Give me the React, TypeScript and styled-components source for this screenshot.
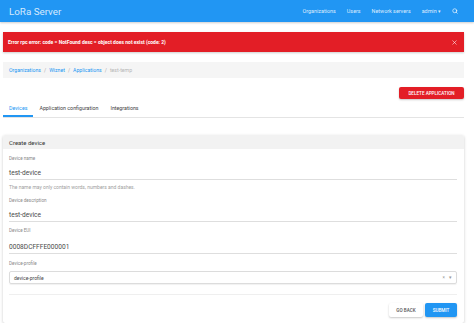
import styled, { createGlobalStyle } from "styled-components"
import { Search, X } from "lucide-react"

const GlobalStyle = createGlobalStyle`
  html, body {
    margin: 0;
    padding: 0;
    background: #fff;
    font-family: Roboto, "Liberation Sans", sans-serif;
  }
`

const AppBar = styled.header`
  height: 22px;
  background: #2196f3;
  display: flex;
  align-items: center;
  padding: 0 9px;
  box-shadow: 0 1px 2px rgba(0, 0, 0, 0.2);
`

const Title = styled.div`
  font-size: 9.8px;
  color: rgba(255, 255, 255, 0.82);
  flex: 1;
`

const Nav = styled.nav`
  display: flex;
  align-items: center;
  gap: 11px;
  padding-right: 7px;
`

const NavItem = styled.span`
  font-size: 5.4px;
  color: rgba(255, 255, 255, 0.85);
  display: flex;
  align-items: center;
  gap: 2px;
`

const Main = styled.main`
  padding: 10px 10px 0 3px;
`

const ErrorBanner = styled.div`
  height: 20px;
  background: #e31e26;
  display: flex;
  align-items: center;
  padding: 0 6px 0 5px;
  box-shadow: 0 1px 2px rgba(0, 0, 0, 0.2);

  span {
    flex: 1;
    color: #fff;
    font-size: 5px;
    font-weight: 700;
  }

  svg {
    color: rgba(255, 255, 255, 0.75);
  }
`

const Breadcrumbs = styled.div`
  margin-top: 10px;
  height: 16px;
  background: #f5f5f5;
  display: flex;
  align-items: center;
  padding: 0 6px;
  font-size: 5.2px;
  gap: 3px;
`

const Crumb = styled.span<{ $current?: boolean }>`
  color: ${(p) => (p.$current ? "#b5b5b5" : "#2196f3")};
`

const Sep = styled.span`
  color: #aaa;
`

const ActionRow = styled.div`
  display: flex;
  justify-content: flex-end;
  margin-top: 9px;
`

const Button = styled.button<{ $color?: string; $text?: string; $width: number; $height: number }>`
  height: ${(p) => p.$height}px;
  width: ${(p) => p.$width}px;
  border: none;
  border-radius: 2px;
  background: ${(p) => p.$color || "#fff"};
  color: ${(p) => p.$text || "#fff"};
  font-family: Roboto, "Liberation Sans", sans-serif;
  font-size: 4.6px;
  font-weight: 500;
  text-transform: uppercase;
  padding: 0;
  box-shadow: 0 1px 2px rgba(0, 0, 0, 0.22);
`

const Tabs = styled.div`
  display: flex;
  height: 17px;
  border-bottom: 1px solid #e4e4e4;
  margin-top: 1px;
`

const Tab = styled.div<{ $active?: boolean }>`
  display: flex;
  align-items: center;
  padding: 0 6px;
  font-size: 5.3px;
  color: ${(p) => (p.$active ? "#2196f3" : "#444")};
  border-bottom: 2px solid ${(p) => (p.$active ? "#2196f3" : "transparent")};
`

const Card = styled.section`
  margin-top: 17px;
  border-radius: 2px;
  box-shadow: 0 1px 3px rgba(0, 0, 0, 0.22);
  overflow: hidden;
`

const CardHeader = styled.div`
  height: 14px;
  background: #f2f2f2;
  display: flex;
  align-items: center;
  padding: 0 6px;
  font-size: 6px;
  color: #333;
`

const CardBody = styled.div`
  padding: 0 7px 6px 6px;
`

const Field = styled.div<{ $top: number }>`
  margin-top: ${(p) => p.$top}px;
`

const Label = styled.div`
  font-size: 4.6px;
  line-height: 6px;
  color: #8a8a8a;
`

const Value = styled.div<{ $gap: number }>`
  margin-top: ${(p) => p.$gap}px;
  font-size: 6.6px;
  line-height: 10px;
  color: #4a4a4a;
  padding-bottom: 1px;
  border-bottom: 1px solid #dedede;
`

const Helper = styled.div`
  margin-top: 4px;
  font-size: 5px;
  line-height: 6px;
  color: #a0a0a0;
`

const SelectBox = styled.div`
  margin-top: 4px;
  height: 13px;
  border: 1px solid #dcdcdc;
  border-radius: 2px;
  box-shadow: 0 1px 1px rgba(0, 0, 0, 0.06);
  display: flex;
  align-items: center;
  padding: 0 4px;
  box-sizing: border-box;
  font-size: 5px;
  color: #444;

  span {
    flex: 1;
  }
`

const SelectIcons = styled.div`
  display: flex;
  gap: 4px;
  color: #999;
  font-size: 4.5px;
`

const Divider = styled.hr`
  margin: 10px 0 0;
  border: none;
  border-top: 1px solid #efefef;
`

const Footer = styled.div`
  display: flex;
  justify-content: flex-end;
  gap: 2px;
  margin-top: 8px;
`

export default function App() {
  return (
    <>
      <GlobalStyle />
      <AppBar>
        <Title>LoRa Server</Title>
        <Nav>
          <NavItem>Organizations</NavItem>
          <NavItem>Users</NavItem>
          <NavItem>Network servers</NavItem>
          <NavItem>admin ▾</NavItem>
          <NavItem>
            <Search size={6} strokeWidth={3} />
          </NavItem>
        </Nav>
      </AppBar>
      <Main>
        <ErrorBanner>
          <span>Error rpc error: code = NotFound desc = object does not exist (code: 2)</span>
          <X size={7} strokeWidth={2.5} />
        </ErrorBanner>
        <Breadcrumbs>
          <Crumb>Organizations</Crumb>
          <Sep>/</Sep>
          <Crumb>Wiznet</Crumb>
          <Sep>/</Sep>
          <Crumb>Applications</Crumb>
          <Sep>/</Sep>
          <Crumb $current>test-temp</Crumb>
        </Breadcrumbs>
        <ActionRow>
          <Button $color="#e31e26" $width={65} $height={12}>Delete application</Button>
        </ActionRow>
        <Tabs>
          <Tab $active>Devices</Tab>
          <Tab>Application configuration</Tab>
          <Tab>Integrations</Tab>
        </Tabs>
        <Card>
          <CardHeader>Create device</CardHeader>
          <CardBody>
            <Field $top={7}>
              <Label>Device name</Label>
              <Value $gap={6}>test-device</Value>
              <Helper>The name may only contain words, numbers and dashes.</Helper>
            </Field>
            <Field $top={8}>
              <Label>Device description</Label>
              <Value $gap={6}>test-device</Value>
            </Field>
            <Field $top={6}>
              <Label>Device EUI</Label>
              <Value $gap={8}>0008DCFFFE000001</Value>
            </Field>
            <Field $top={7}>
              <Label>Device-profile</Label>
              <SelectBox>
                <span>device-profile</span>
                <SelectIcons>
                  <span>×</span>
                  <span>▾</span>
                </SelectIcons>
              </SelectBox>
            </Field>
            <Divider />
            <Footer>
              <Button $width={34} $height={14} $text="#555">Go back</Button>
              <Button $width={32} $height={14} $color="#2196f3">Submit</Button>
            </Footer>
          </CardBody>
        </Card>
      </Main>
    </>
  )
}
